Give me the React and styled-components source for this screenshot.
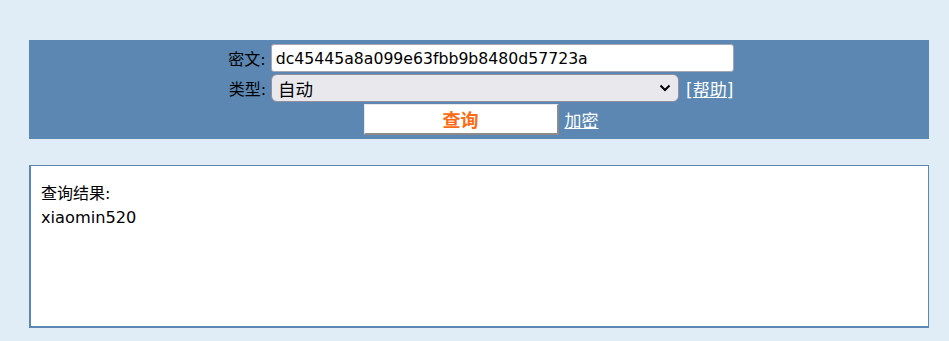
import styled, { createGlobalStyle } from "styled-components";

const GlobalStyle = createGlobalStyle`
  html, body {
    margin: 0;
    padding: 0;
    background: #e1edf6;
  }
  body {
    font-family: "DejaVu Sans", "Noto Sans CJK SC", sans-serif;
    color: #000;
  }
`;

const Page = styled.div`
  width: 949px;
  height: 341px;
  padding: 40px 20px 0 29px;
  box-sizing: border-box;
`;

const SearchPanel = styled.form`
  width: 900px;
  box-sizing: border-box;
  background: #5b87b2;
  padding: 4px 0 4px 4px;
  display: flex;
  flex-direction: column;
  align-items: center;
  gap: 2px;
`;

const Row = styled.div`
  display: flex;
  align-items: center;
  justify-content: center;
  gap: ${(p) => p.$gap || 5}px;
`;

const Label = styled.label`
  font-size: 16px;
  font-family: "DejaVu Sans", "Noto Sans CJK SC", sans-serif;
`;

const TextInput = styled.input`
  width: 463px;
  height: 28px;
  box-sizing: border-box;
  border: 1px solid #a4a6b4;
  border-radius: 3px;
  background: #fff;
  padding: 0 4px;
  font-family: "DejaVu Sans", sans-serif;
  font-size: 15.7px;
  color: #000;
  outline: none;
`;

const SelectWrap = styled.div`
  position: relative;
  width: 408px;
  height: 28px;
  margin-right: 2px;
`;

const Select = styled.select`
  appearance: none;
  width: 100%;
  height: 100%;
  box-sizing: border-box;
  border: 1px solid #8f8f9d;
  border-radius: 6px;
  background: #e9e8ed;
  padding: 0 6px;
  font-family: "Noto Sans CJK SC", sans-serif;
  font-size: 17.5px;
  color: #000;
`;

const Chevron = styled.svg`
  position: absolute;
  right: 8px;
  top: 10px;
  pointer-events: none;
`;

const Link = styled.a`
  color: #fff;
  text-decoration: underline;
  font-size: 17px;
  font-family: "DejaVu Sans", "Noto Sans CJK SC", sans-serif;
  cursor: pointer;
`;

const SubmitButton = styled.button`
  width: 195px;
  height: 31px;
  box-sizing: border-box;
  background: #fff;
  border-style: solid;
  border-width: 1px 2px 2px 1px;
  border-color: #e8e8e8 #8c8c8c #8c8c8c #e8e8e8;
  color: #ff6a13;
  font-family: "Noto Sans CJK SC", sans-serif;
  font-weight: bold;
  font-size: 18px;
  padding: 0;
`;

const ResultBox = styled.div`
  margin-top: 26px;
  width: 900px;
  height: 163px;
  box-sizing: border-box;
  background: #fff;
  border-style: solid;
  border-color: #5b87b2;
  border-width: 1px 1px 2px 2px;
  padding: 16px 10px;
  line-height: 24px;
`;

const ResultTitle = styled.div`
  font-family: "DejaVu Sans", "Noto Sans CJK SC", sans-serif;
  font-size: 16px;
`;

const ResultValue = styled.div`
  font-family: "DejaVu Sans", sans-serif;
  font-size: 16.2px;
`;

const App = () => {
  return (
    <Page>
      <GlobalStyle />
      <SearchPanel onSubmit={(e) => e.preventDefault()}>
        <Row>
          <Label>密文:</Label>
          <TextInput defaultValue="dc45445a8a099e63fbb9b8480d57723a" />
        </Row>
        <Row>
          <Label>类型:</Label>
          <SelectWrap>
            <Select defaultValue="auto">
              <option value="auto">自动</option>
            </Select>
            <Chevron width="12" height="8" viewBox="0 0 12 8">
              <path
                d="M1.5 1.5 L6 6 L10.5 1.5"
                fill="none"
                stroke="#000"
                strokeWidth="2"
              />
            </Chevron>
          </SelectWrap>
          <Link>[帮助]</Link>
        </Row>
        <Row $gap={6}>
          <SubmitButton type="submit">查询</SubmitButton>
          <Link>加密</Link>
        </Row>
      </SearchPanel>
      <ResultBox>
        <ResultTitle>查询结果:</ResultTitle>
        <ResultValue>xiaomin520</ResultValue>
      </ResultBox>
    </Page>
  );
};

export default App;
